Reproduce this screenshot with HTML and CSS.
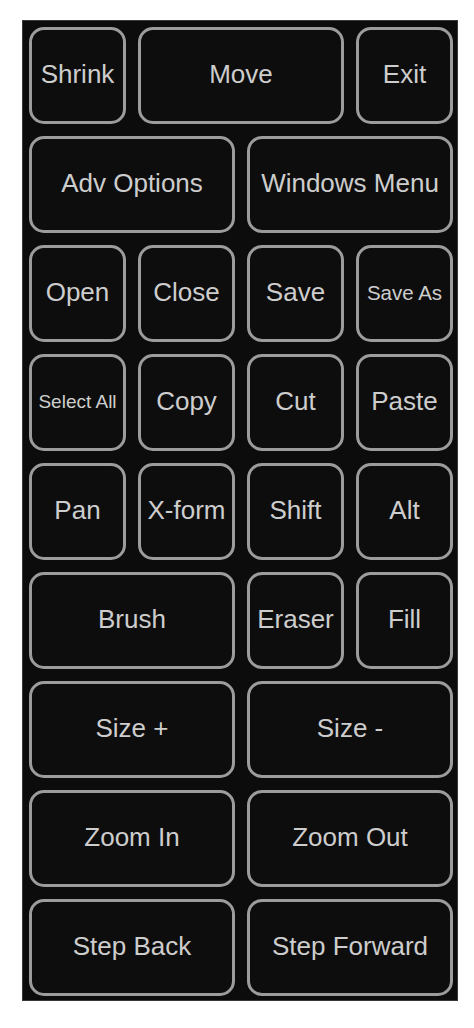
FILE: index.html
```html
<!DOCTYPE html>
<html>
<head>
<meta charset="utf-8">
<link rel="stylesheet" href="styles.css">
</head>
<body>
<div class="panel">
  <div class="grid">
    <div class="btn">Shrink</div>
    <div class="btn span2">Move</div>
    <div class="btn">Exit</div>

    <div class="btn span2">Adv Options</div>
    <div class="btn span2">Windows Menu</div>

    <div class="btn">Open</div>
    <div class="btn">Close</div>
    <div class="btn">Save</div>
    <div class="btn small-md">Save As</div>

    <div class="btn small">Select All</div>
    <div class="btn">Copy</div>
    <div class="btn">Cut</div>
    <div class="btn">Paste</div>

    <div class="btn">Pan</div>
    <div class="btn">X-form</div>
    <div class="btn">Shift</div>
    <div class="btn">Alt</div>

    <div class="btn span2">Brush</div>
    <div class="btn">Eraser</div>
    <div class="btn">Fill</div>

    <div class="btn span2">Size +</div>
    <div class="btn span2">Size -</div>

    <div class="btn span2">Zoom In</div>
    <div class="btn span2">Zoom Out</div>

    <div class="btn span2">Step Back</div>
    <div class="btn span2">Step Forward</div>
  </div>
</div>
</body>
</html>
```
FILE: styles.css
```css
html, body {
  margin: 0;
  padding: 0;
  background: #ffffff;
}
body {
  padding: 20px 0 0 22px;
  font-family: "Liberation Sans", Arial, sans-serif;
}
.panel {
  box-sizing: border-box;
  width: 436px;
  height: 981px;
  background: #0c0c0c;
  border: 1px solid #3a3a3a;
  padding: 6px 3px 0 6px;
}
.grid {
  display: grid;
  grid-template-columns: repeat(4, 97px);
  grid-auto-rows: 97px;
  gap: 12px;
}
.btn {
  box-sizing: border-box;
  border: 3px solid #9c9c9c;
  border-radius: 15px;
  background: #0d0d0d;
  color: #cdcdcd;
  font-size: 26px;
  display: flex;
  align-items: center;
  justify-content: center;
  padding-bottom: 2px;
  white-space: nowrap;
  overflow: hidden;
}
.span2 {
  grid-column: span 2;
}
.small {
  font-size: 19px;
}
.small-md {
  font-size: 20.5px;
}
```
